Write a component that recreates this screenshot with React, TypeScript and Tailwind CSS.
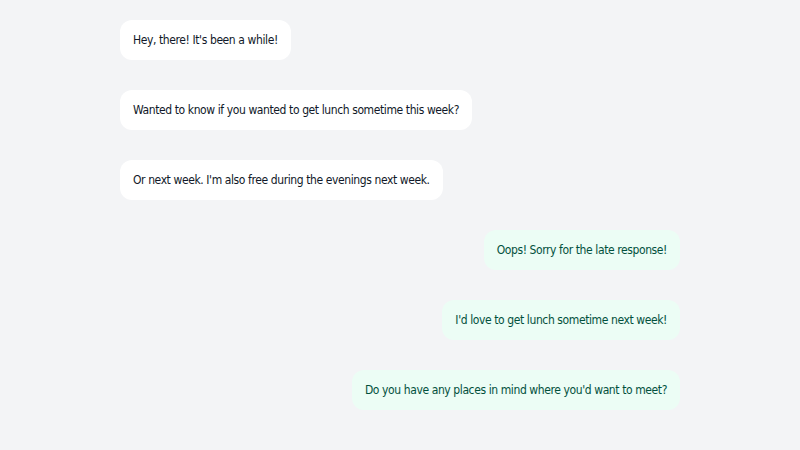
const messages = [
  { text: "Hey, there! It's been a while!", mine: false },
  { text: 'Wanted to know if you wanted to get lunch sometime this week?', mine: false },
  { text: "Or next week. I'm also free during the evenings next week.", mine: false },
  { text: 'Oops! Sorry for the late response!', mine: true },
  { text: "I'd love to get lunch sometime next week!", mine: true },
  { text: "Do you have any places in mind where you'd want to meet?", mine: true },
]

export default function App() {
  return (
    <div
      className="min-h-[450px] w-full bg-gray-100 py-5"
      style={{ fontFamily: '"DejaVu Sans Condensed", "DejaVu Sans", sans-serif', fontStretch: 'condensed' }}
    >
      <div className="mx-auto flex w-[560px] flex-col gap-[30px]">
        {messages.map((m) => (
          <div key={m.text} className={m.mine ? 'flex justify-end' : 'flex justify-start'}>
            <div
              className={
                m.mine
                  ? 'rounded-xl bg-emerald-50 px-[13px] py-3 text-xs leading-4 tracking-[-0.4px] text-emerald-900'
                  : 'rounded-xl bg-white px-[13px] py-3 text-xs leading-4 tracking-[-0.4px] text-gray-900'
              }
            >
              {m.text}
            </div>
          </div>
        ))}
      </div>
    </div>
  )
}
